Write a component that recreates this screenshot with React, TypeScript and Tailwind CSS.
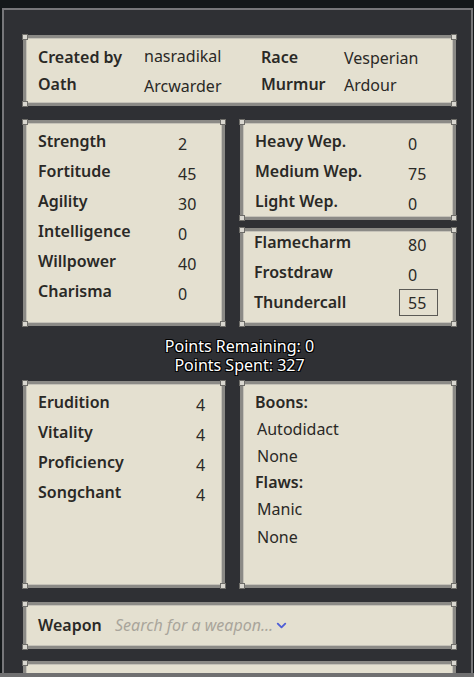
import { ChevronDown } from "lucide-react";
import type { ReactNode } from "react";

const font = { fontFamily: '"Noto Sans", "Open Sans", sans-serif' };

function Panel({ className = "", children }: { className?: string; children?: ReactNode }) {
  return (
    <div
      className={`relative border-[3px] border-[#8b8a86] bg-[#e4e0d0] shadow-[inset_0_0_0_1px_#c6c3b9] ${className}`}
    >
      <span className="absolute -left-[4px] -top-[4px] h-[6px] w-[6px] border border-[#6e6d69] bg-[#d9d7d0]" />
      <span className="absolute -right-[4px] -top-[4px] h-[6px] w-[6px] border border-[#6e6d69] bg-[#d9d7d0]" />
      <span className="absolute -bottom-[4px] -left-[4px] h-[6px] w-[6px] border border-[#6e6d69] bg-[#d9d7d0]" />
      <span className="absolute -bottom-[4px] -right-[4px] h-[6px] w-[6px] border border-[#6e6d69] bg-[#d9d7d0]" />
      {children}
    </div>
  );
}

function StatRow({ label, value, col, h = "h-[30px]" }: { label: string; value: ReactNode; col: string; h?: string }) {
  return (
    <div className={`flex items-start ${h}`}>
      <span className={`${col} shrink-0 font-semibold leading-[24px]`}>{label}</span>
      <span className="pt-[3px] leading-[24px]">{value}</span>
    </div>
  );
}

const attributes: [string, number][] = [
  ["Strength", 2],
  ["Fortitude", 45],
  ["Agility", 30],
  ["Intelligence", 0],
  ["Willpower", 40],
  ["Charisma", 0],
];

const weapons: [string, number][] = [
  ["Heavy Wep.", 0],
  ["Medium Wep.", 75],
  ["Light Wep.", 0],
];

const skills: [string, number][] = [
  ["Erudition", 4],
  ["Vitality", 4],
  ["Proficiency", 4],
  ["Songchant", 4],
];

export default function App() {
  return (
    <div className="relative h-[677px] w-[474px] overflow-hidden bg-[#14181a] pl-[2px] pr-[1px] pt-[8px] text-[16px] text-[#2a2926]" style={font}>
      <div className="h-full border-x-2 border-t-2 border-[#77777a] bg-[#2f3034] pl-[19px] pr-[15px] pt-[25px]">
        <Panel className="h-[71px] px-[12px] pt-[5px]">
          <div className="grid grid-cols-[106px_117px_83px_1fr] grid-rows-[28px_28px] leading-[28px]">
            <span className="font-semibold">Created by</span>
            <span className="-mt-[1px]">nasradikal</span>
            <span className="font-semibold">Race</span>
            <span className="pt-[1px]">Vesperian</span>
            <span className="-mt-[1px] font-semibold">Oath</span>
            <span className="pt-[1px]">Arcwarder</span>
            <span className="-mt-[1px] font-semibold">Murmur</span>
            <span>Ardour</span>
          </div>
        </Panel>

        <div className="mt-[14px] grid grid-cols-[202px_216px] gap-x-[15px]">
          <Panel className="px-[12px] pt-[6px]">
            {attributes.map(([label, value]) => (
              <StatRow key={label} label={label} value={value} col="w-[140px]" />
            ))}
          </Panel>
          <div className="flex flex-col gap-[8px]">
            <Panel className="h-[100px] px-[12px] pt-[6px]">
              {weapons.map(([label, value]) => (
                <StatRow key={label} label={label} value={value} col="w-[153px]" />
              ))}
            </Panel>
            <Panel className="h-[98px] px-[11px]">
              <div className="-mt-[1px]">
                <StatRow label="Flamecharm" value={80} col="w-[154px]" />
                <StatRow label="Frostdraw" value={0} col="w-[154px]" />
                <div className="flex h-[30px] items-start">
                  <span className="w-[145px] shrink-0 font-semibold leading-[24px]">Thundercall</span>
                  <span className="-mt-[1px] flex h-[27px] w-[39px] items-center border border-[#5b5a56] pl-[8px]">55</span>
                </div>
              </div>
            </Panel>
          </div>
        </div>

        <div className="mt-[11px] text-center leading-[19px] text-white [text-shadow:-1px_-1px_0_#000,1px_-1px_0_#000,-1px_1px_0_#000,1px_1px_0_#000]">
          <div>Points Remaining: 0</div>
          <div>Points Spent: 327</div>
        </div>

        <div className="mt-[6px] grid h-[207px] grid-cols-[202px_216px] gap-x-[15px]">
          <Panel className="px-[12px] pt-[6px]">
            {skills.map(([label, value]) => (
              <StatRow key={label} label={label} value={value} col="w-[158px]" />
            ))}
          </Panel>
          <Panel className="px-[12px] pt-[6px]">
            <div className="h-[27px] font-semibold leading-[24px]">Boons:</div>
            <div className="h-[27px] pl-[2px] leading-[24px]">Autodidact</div>
            <div className="h-[26px] pl-[2px] leading-[24px]">None</div>
            <div className="h-[27px] font-semibold leading-[24px]">Flaws:</div>
            <div className="h-[28px] pl-[2px] leading-[24px]">Manic</div>
            <div className="h-[27px] pl-[2px] leading-[24px]">None</div>
          </Panel>
        </div>

        <Panel className="mt-[14px] flex h-[47px] items-center px-[12px] pb-[1px]">
          <span className="w-[77px] font-semibold">Weapon</span>
          <span className="italic text-[#a9a59b]">Search for a weapon...</span>
          <ChevronDown className="ml-[1px] text-[#4f5fd6]" size={15} strokeWidth={3} />
        </Panel>

        <Panel className="mt-[12px] h-[60px]" />
      </div>
      <div className="absolute bottom-0 left-0 h-[4px] w-full bg-[#707071]" />
    </div>
  );
}
